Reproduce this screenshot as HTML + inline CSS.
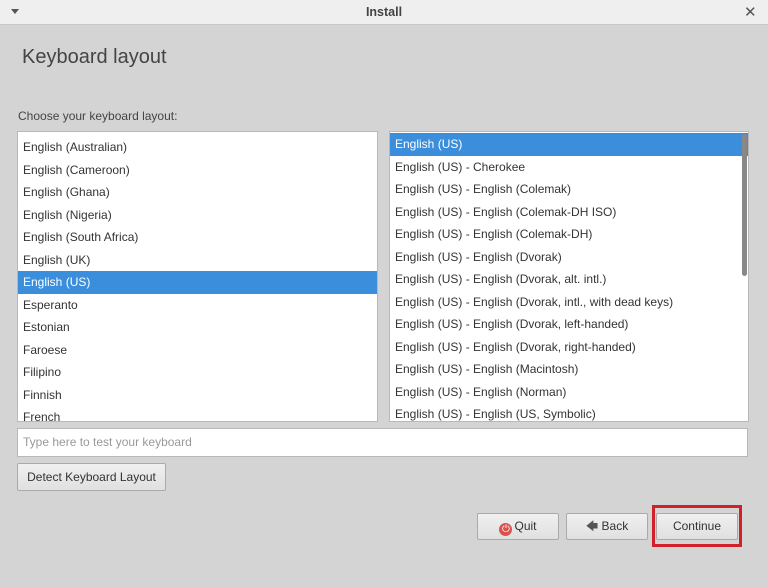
<html><head><style>
body{margin:0;width:768px;height:587px;background:#d4d4d4;font-family:"Liberation Sans","DejaVu Sans",sans-serif;position:relative;overflow:hidden;color:#333}
.tb{position:absolute;left:0;top:0;width:768px;height:24px;background:#efefef;border-bottom:1px solid #c8c8c8}
.a{position:absolute}
.list{position:absolute;background:#fff;border:1px solid #b8b8b8;overflow:hidden;box-sizing:border-box}
.row{height:22.5px;line-height:22.5px;padding-left:5px;font-size:12px;color:#333;white-space:nowrap}
.sel{background:#3a8edb;color:#fff}
.btn{position:absolute;background:linear-gradient(#f0f0f0,#e0e0e0);border:1px solid #aaa;border-radius:2px;font-size:12px;color:#333;text-align:center;box-sizing:border-box}
</style></head><body>
<div class="tb"></div>
<div class="a" style="left:11px;top:9px;width:0;height:0;border-left:4px solid transparent;border-right:4px solid transparent;border-top:5px solid #555"></div>
<div class="a" style="left:0;width:768px;top:5px;text-align:center;font-size:12.5px;font-weight:bold;color:#444">Install</div>
<div class="a" style="left:744px;top:3px;font-size:15px;color:#555">✕</div>
<div class="a" style="left:22px;top:46px;font-size:20px;color:#444">Keyboard layout</div>
<div class="a" style="left:18px;top:109px;font-size:12px;color:#444">Choose your keyboard layout:</div>
<div class="list" style="left:17px;top:131px;width:361px;height:291px;padding-top:4px">
<div class="row">English (Australian)</div><div class="row">English (Cameroon)</div><div class="row">English (Ghana)</div><div class="row">English (Nigeria)</div><div class="row">English (South Africa)</div><div class="row">English (UK)</div><div class="row sel">English (US)</div><div class="row">Esperanto</div><div class="row">Estonian</div><div class="row">Faroese</div><div class="row">Filipino</div><div class="row">Finnish</div><div class="row">French</div>
</div>
<div class="list" style="left:389px;top:131px;width:360px;height:291px;padding-top:1px">
<div class="row sel">English (US)</div><div class="row">English (US) - Cherokee</div><div class="row">English (US) - English (Colemak)</div><div class="row">English (US) - English (Colemak-DH ISO)</div><div class="row">English (US) - English (Colemak-DH)</div><div class="row">English (US) - English (Dvorak)</div><div class="row">English (US) - English (Dvorak, alt. intl.)</div><div class="row">English (US) - English (Dvorak, intl., with dead keys)</div><div class="row">English (US) - English (Dvorak, left-handed)</div><div class="row">English (US) - English (Dvorak, right-handed)</div><div class="row">English (US) - English (Macintosh)</div><div class="row">English (US) - English (Norman)</div><div class="row">English (US) - English (US, Symbolic)</div>
<div class="a" style="right:1px;top:2px;width:5px;height:142px;background:#888;border-radius:3px"></div>
</div>
<div class="a" style="left:17px;top:428px;background:#fff;border:1px solid #b8b8b8;font-size:12px;color:#999;line-height:27px;padding-left:5px;box-sizing:border-box;width:731px;height:29px">Type here to test your keyboard</div>
<div class="btn" style="left:17px;top:463px;width:149px;height:28px;line-height:26px">Detect Keyboard Layout</div>
<div class="btn" style="left:477px;top:513px;width:82px;height:27px;line-height:25px"><span style="display:inline-block;width:13px;height:13px;border-radius:50%;background:#d9534f;color:#fff;font-size:10px;line-height:13px;vertical-align:-2px;margin-right:2px">⏻</span>Quit</div>
<div class="btn" style="left:566px;top:513px;width:82px;height:27px;line-height:25px"><span style="color:#555">🡄</span> Back</div>
<div class="btn" style="left:656px;top:513px;width:82px;height:27px;line-height:25px">Continue</div>
<div class="a" style="left:652px;top:505px;width:84px;height:36px;border:3px solid #d0202a"></div>
</body></html>
